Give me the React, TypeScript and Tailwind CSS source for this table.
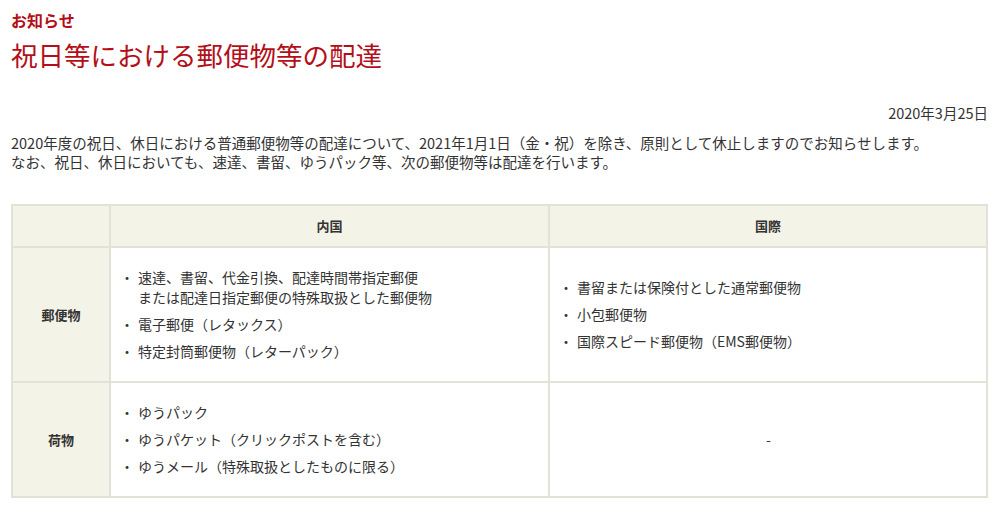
const jp = { fontFamily: '"Noto Sans CJK JP", "Noto Sans", sans-serif' };

type Row = {
  label: string;
  domestic: string[][];
  intl: string[][] | null;
};

const rows: Row[] = [
  {
    label: '郵便物',
    domestic: [
      ['速達、書留、代金引換、配達時間帯指定郵便', 'または配達日指定郵便の特殊取扱とした郵便物'],
      ['電子郵便（レタックス）'],
      ['特定封筒郵便物（レターパック）'],
    ],
    intl: [['書留または保険付とした通常郵便物'], ['小包郵便物'], ['国際スピード郵便物（EMS郵便物）']],
  },
  {
    label: '荷物',
    domestic: [['ゆうパック'], ['ゆうパケット（クリックポストを含む）'], ['ゆうメール（特殊取扱としたものに限る）']],
    intl: null,
  },
];

function Items({ items }: { items: string[][] }) {
  return (
    <ul className="flex flex-col gap-[7px]">
      {items.map((lines, i) => (
        <li key={i} className="relative pl-[16px]">
          <span className="absolute left-[-2px] top-0 w-[14px] text-center">・</span>
          {lines.map((l, j) => (
            <div key={j}>{l}</div>
          ))}
        </li>
      ))}
    </ul>
  );
}

export default function App() {
  return (
    <div className="bg-white text-[#333] px-[11px] pr-[12px] pt-[10px] pb-[22px]" style={jp}>
      <p className="text-[16px] font-bold leading-[20px] text-[#b30f19]">お知らせ</p>
      <h1 className="mt-[8px] text-[26.5px] leading-[34px] text-[#b30f19]">祝日等における郵便物等の配達</h1>

      <p className="mt-[31px] text-right text-[14.5px] leading-[20px]">2020年3月25日</p>
      <div className="mt-[10px] text-[14.5px] leading-[19px]">
        <p>2020年度の祝日、休日における普通郵便物等の配達について、2021年1月1日（金・祝）を除き、原則として休止しますのでお知らせします。</p>
        <p>なお、祝日、休日においても、速達、書留、ゆうパック等、次の郵便物等は配達を行います。</p>
      </div>

      <table className="mt-[33px] w-full border-collapse text-[14px] leading-[20px]">
        <thead>
          <tr className="bg-[#f3f3e7]">
            <th className="w-[98px] border-2 border-[#e2e2d7]"></th>
            <th className="w-[439px] border-2 border-[#e2e2d7] pt-[10px] pb-[10px] text-[13px] font-bold">内国</th>
            <th className="border-2 border-[#e2e2d7] pt-[10px] pb-[10px] text-[13px] font-bold">国際</th>
          </tr>
        </thead>
        <tbody>
          {rows.map((r) => (
            <tr key={r.label}>
              <th className="border-2 border-[#e2e2d7] bg-[#f3f3e7] text-[13px] font-bold">{r.label}</th>
              <td className="border-2 border-[#e2e2d7] pt-[19px] pb-[20px] pl-[11px] pr-[10px] align-middle">
                <Items items={r.domestic} />
              </td>
              <td className="border-2 border-[#e2e2d7] pt-[19px] pb-[20px] pl-[11px] pr-[10px] align-middle">
                {r.intl ? <Items items={r.intl} /> : <div className="text-center">-</div>}
              </td>
            </tr>
          ))}
        </tbody>
      </table>
    </div>
  );
}
